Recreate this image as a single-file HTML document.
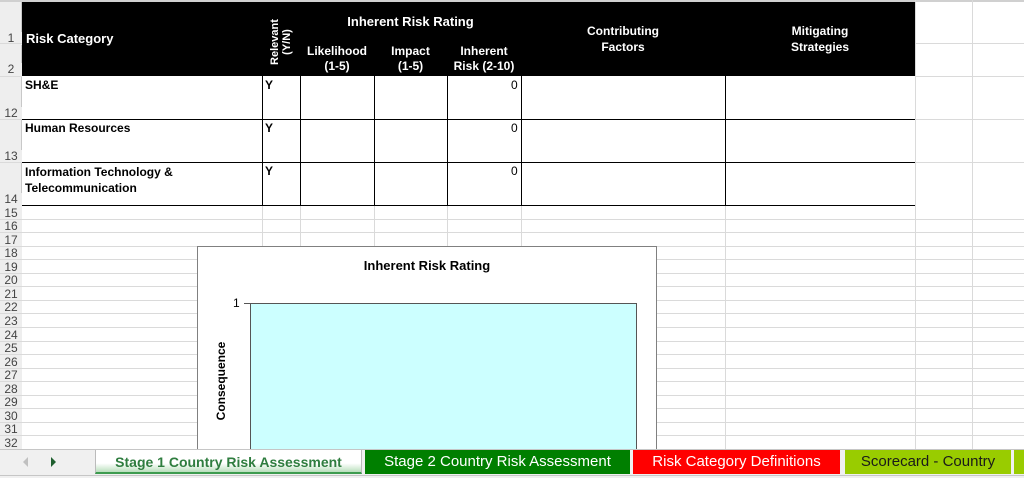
<!DOCTYPE html>
<html><head><style>
*{margin:0;padding:0;box-sizing:border-box}
body{width:1024px;height:478px;overflow:hidden;background:#fff;position:relative;font-family:"Liberation Sans",Arial,sans-serif}
.a{position:absolute}
.rh{position:absolute;left:0;width:22px;background:#eeeeee;font-size:12px;color:#444;text-align:center;font-family:"Liberation Sans",sans-serif;line-height:13px}
.hl{position:absolute;height:1px;background:#dadada}
.vl{position:absolute;width:1px;background:#dadada}
.b{font-weight:bold;font-size:12px;color:#000}
.w{color:#fff;font-weight:bold;font-size:12px;text-align:center;position:absolute;line-height:16px}
.tab{position:absolute;top:450px;height:24px;font-family:"Liberation Sans",sans-serif;font-size:15px;line-height:24px;text-align:center;white-space:nowrap;overflow:hidden}
</style></head><body>
<div class="a" style="left:0;top:0;width:22px;height:449px;background:#eeeeee;border-right:1px solid #c8c8c8"></div>
<div class="a" style="left:0;top:0;width:1024px;height:2px;background:#d0d0d0"></div>
<div class="rh" style="top:32px">1</div>
<div class="rh" style="top:63px">2</div>
<div class="rh" style="top:107px">12</div>
<div class="rh" style="top:150px">13</div>
<div class="rh" style="top:193px">14</div>
<div id="rows"></div>
<div class="a" style="left:22px;top:2px;width:893px;height:74px;background:#000"></div>
<div class="a b" style="left:26px;top:31px;color:#fff;font-size:13px">Risk Category</div>
<div class="a" style="left:263px;top:2px;width:36px;height:74px"><div style="position:absolute;left:-20px;top:28px;width:76px;transform:rotate(-90deg);color:#fff;font-weight:bold;font-size:11px;text-align:center;line-height:12px">Relevant<br>(Y/N)</div></div>
<div class="w" style="left:300px;top:14px;width:221px;font-size:13px">Inherent Risk Rating</div>
<div class="w" style="left:300px;top:44px;width:74px;line-height:15px">Likelihood<br>(1-5)</div>
<div class="w" style="left:374px;top:44px;width:73px;line-height:15px">Impact<br>(1-5)</div>
<div class="w" style="left:447px;top:44px;width:74px;line-height:15px">Inherent<br>Risk (2-10)</div>
<div class="w" style="left:521px;top:23px;width:204px">Contributing<br>Factors</div>
<div class="w" style="left:725px;top:23px;width:190px">Mitigating<br>Strategies</div>
<div class="vl" style="left:972px;top:0;height:449px"></div>
<div class="hl" style="left:915px;top:43px;width:109px"></div>
<div class="hl" style="left:915px;top:76px;width:109px"></div>
<div class="hl" style="left:915px;top:119px;width:109px"></div>
<div class="hl" style="left:915px;top:162px;width:109px"></div>
<div class="a" style="left:22px;top:76px;width:894px;height:130px;border-bottom:1px solid #000;border-right:1px solid #000"></div>
<div class="a" style="left:22px;top:119px;width:894px;height:1px;background:#000"></div>
<div class="a" style="left:22px;top:162px;width:894px;height:1px;background:#000"></div>
<div class="a" style="left:262px;top:76px;width:1px;height:130px;background:#000"></div>
<div class="a" style="left:300px;top:76px;width:1px;height:130px;background:#000"></div>
<div class="a" style="left:374px;top:76px;width:1px;height:130px;background:#000"></div>
<div class="a" style="left:447px;top:76px;width:1px;height:130px;background:#000"></div>
<div class="a" style="left:521px;top:76px;width:1px;height:130px;background:#000"></div>
<div class="a" style="left:725px;top:76px;width:1px;height:130px;background:#000"></div>
<div class="a b" style="left:25px;top:78px">SH&amp;E</div>
<div class="a b" style="left:25px;top:121px">Human Resources</div>
<div class="a b" style="left:25px;top:164px;line-height:16px">Information Technology &amp;<br>Telecommunication</div>
<div class="a b" style="left:265px;top:78px">Y</div>
<div class="a b" style="left:265px;top:121px">Y</div>
<div class="a b" style="left:265px;top:164px">Y</div>
<div class="a" style="left:511px;top:78px;font-size:12px">0</div>
<div class="a" style="left:511px;top:121px;font-size:12px">0</div>
<div class="a" style="left:511px;top:164px;font-size:12px">0</div>
<div class="vl" style="left:262px;top:206px;height:243px"></div>
<div class="vl" style="left:300px;top:206px;height:243px"></div>
<div class="vl" style="left:374px;top:206px;height:243px"></div>
<div class="vl" style="left:447px;top:206px;height:243px"></div>
<div class="vl" style="left:521px;top:206px;height:243px"></div>
<div class="vl" style="left:725px;top:206px;height:243px"></div>
<div class="vl" style="left:915px;top:0;height:449px"></div>
<div class="a" style="left:197px;top:246px;width:460px;height:204px;background:#fff;border:1px solid #808080;border-bottom:none"></div>
<div class="a" style="left:197px;top:258px;width:460px;text-align:center;font-weight:bold;font-size:13px">Inherent Risk Rating</div>
<div class="a" style="left:250px;top:303px;width:387px;height:147px;background:#ccffff;border:1px solid #555;border-bottom:none"></div>
<div class="a" style="left:244px;top:303px;width:6px;height:1px;background:#555"></div>
<div class="a" style="left:233px;top:296px;font-size:12px">1</div>
<div class="a" style="left:179px;top:374px;width:84px;text-align:center;transform:rotate(-90deg);font-weight:bold;font-size:12px">Consequence</div>
<div class="a" style="left:0;top:449px;width:1024px;height:29px;background:#f0f0f0;border-top:1px solid #c6c6c6"></div>
<div class="a" style="left:0;top:475px;width:1024px;height:1px;background:#c6c6c6"></div>
<div class="a" style="left:23px;top:457px;width:0;height:0;border-top:5px solid transparent;border-bottom:5px solid transparent;border-right:5px solid #c0c0c0"></div>
<div class="a" style="left:51px;top:457px;width:0;height:0;border-top:5px solid transparent;border-bottom:5px solid transparent;border-left:5px solid #1f5f2f"></div>
<div class="tab" style="left:95px;width:267px;background:linear-gradient(#fff,#fff 60%,#b9dfbc);color:#2f7d3f;font-weight:bold;border-bottom:2px solid #3d9b4f;border-left:1px solid #bbb;border-right:1px solid #bbb;font-size:14px">Stage 1 Country Risk Assessment</div>
<div class="tab" style="left:365px;width:265px;background:#007f00;color:#fff">Stage 2 Country Risk Assessment</div>
<div class="tab" style="left:633px;width:207px;background:#ff0000;color:#fff">Risk Category Definitions</div>
<div class="tab" style="left:845px;width:166px;background:#99cc00;color:#1a1a1a">Scorecard - Country</div>
<div class="tab" style="left:1014px;width:10px;background:#99cc00"></div>
<script>
var h='';for(var i=15;i<=32;i++){var t=Math.round(205+(i-15)*13.55);var t2=Math.round(205+(i-14)*13.55);
h+='<div class="rh" style="top:'+(t+1)+'px;height:'+(t2-t)+'px;line-height:'+(t2-t)+'px">'+i+'</div>';
h+='<div class="hl" style="left:0;top:'+t2+'px;width:1024px"></div>';}
h+='<div class="hl" style="left:0;top:43px;width:22px"></div><div class="hl" style="left:0;top:76px;width:22px"></div><div class="hl" style="left:0;top:119px;width:22px"></div><div class="hl" style="left:0;top:162px;width:22px"></div>';
document.getElementById('rows').innerHTML=h;
</script>
</body></html>
